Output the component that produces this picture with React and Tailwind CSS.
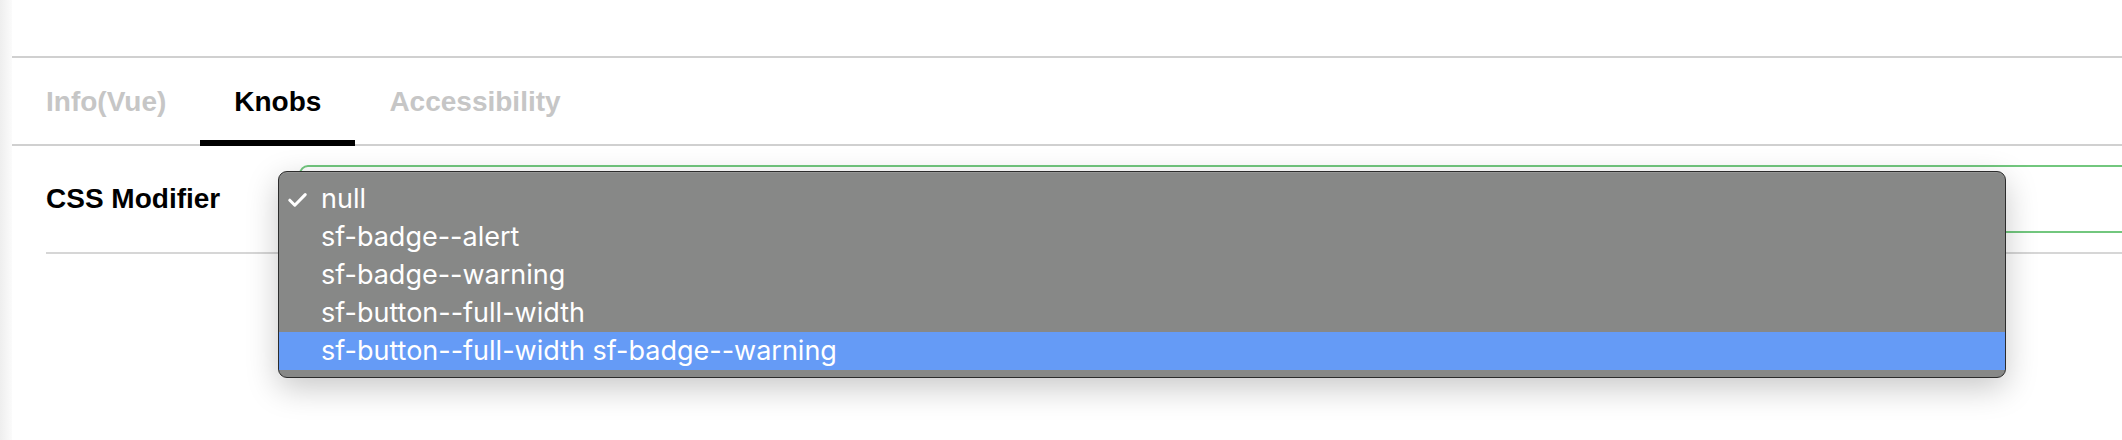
import React from 'react';

const tabs = [
  { name: 'Info(Vue)' },
  { name: 'Knobs', active: true },
  { name: 'Accessibility' },
];

const options = [
  'null',
  'sf-badge--alert',
  'sf-badge--warning',
  'sf-button--full-width',
  'sf-button--full-width sf-badge--warning',
];

const selected = 'null';
const hovered = 'sf-button--full-width sf-badge--warning';

const Check = () => (
  <svg
    className="absolute left-[9px] top-[13px] h-[14px] w-[19px]"
    viewBox="0 0 19 14"
    fill="none"
    stroke="white"
    strokeWidth="3"
    strokeLinecap="round"
    strokeLinejoin="round"
  >
    <polyline points="1.8,7.2 6.8,12.2 17.2,1.6" />
  </svg>
);

const App = () => {
  return (
    <div className="relative flex h-[440px] w-full overflow-hidden bg-white font-['Liberation_Sans',Arial,sans-serif]">
      {/* panel edge */}
      <div className="w-[12px] shrink-0 bg-gradient-to-r from-[#eeeeee] to-[#fbfbfb]" />

      <div className="min-w-0 flex-1">
        {/* tab bar */}
        <div className="mt-[56px] flex h-[90px] items-start border-y-2 border-[#d0d0d0]">
          {tabs.map((tab) => (
            <div
              key={tab.name}
              className={`-mb-[2px] border-b-[6px] px-[34px] pt-[28px] pb-[22px] text-[28px] leading-[32px] font-bold ${
                tab.active ? 'border-black text-black' : 'border-transparent text-[#c6c6c6]'
              }`}
            >
              {tab.name}
            </div>
          ))}
        </div>

        {/* knob row */}
        <div className="ml-[34px] flex h-[108px] items-center border-b-2 border-[#d6d6d6]">
          <div className="w-[253px] shrink-0 text-[28px] leading-[32px] font-bold text-black">
            CSS Modifier
          </div>
          <div className="-mr-[40px] h-[68px] flex-1 rounded-[9px] border-2 border-[#72c77e] bg-white" />
        </div>
      </div>

      {/* native select menu */}
      <div className="absolute left-[278px] top-[171px] w-[1728px] rounded-[9px] border border-[#2c2c2c] bg-[#878887] pt-[8px] pb-[7px] shadow-[0_10px_32px_rgba(0,0,0,0.22),inset_0_1px_0_rgba(255,255,255,0.12)] font-['Inter','Noto_Sans',sans-serif]">
        {options.map((opt) => (
          <div
            key={opt}
            className={`relative h-[38px] pl-[42px] text-[27px] leading-[38px] text-white ${
              opt === hovered ? 'bg-[#659bf6]' : ''
            }`}
          >
            {opt === selected && <Check />}
            {opt}
          </div>
        ))}
      </div>
    </div>
  );
};

export default App;
